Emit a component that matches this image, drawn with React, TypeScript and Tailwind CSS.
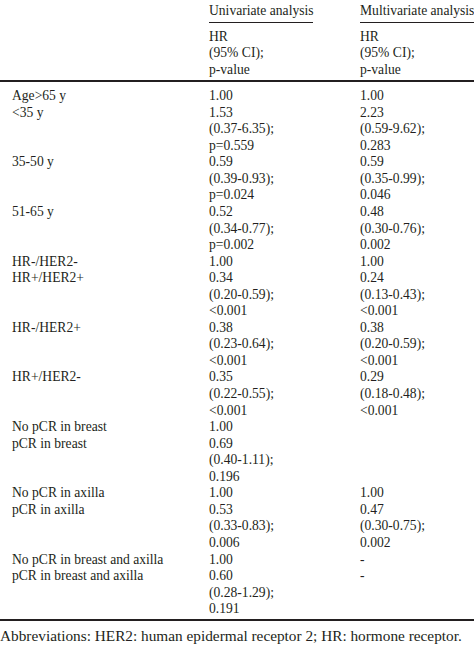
const ROWS: [string, string, string][] = [
  ['Age>65 y', '1.00', '1.00'],
  ['<35 y', '1.53', '2.23'],
  ['', '(0.37-6.35);', '(0.59-9.62);'],
  ['', 'p=0.559', '0.283'],
  ['35-50 y', '0.59', '0.59'],
  ['', '(0.39-0.93);', '(0.35-0.99);'],
  ['', 'p=0.024', '0.046'],
  ['51-65 y', '0.52', '0.48'],
  ['', '(0.34-0.77);', '(0.30-0.76);'],
  ['', 'p=0.002', '0.002'],
  ['HR-/HER2-', '1.00', '1.00'],
  ['HR+/HER2+', '0.34', '0.24'],
  ['', '(0.20-0.59);', '(0.13-0.43);'],
  ['', '<0.001', '<0.001'],
  ['HR-/HER2+', '0.38', '0.38'],
  ['', '(0.23-0.64);', '(0.20-0.59);'],
  ['', '<0.001', '<0.001'],
  ['HR+/HER2-', '0.35', '0.29'],
  ['', '(0.22-0.55);', '(0.18-0.48);'],
  ['', '<0.001', '<0.001'],
  ['No pCR in breast', '1.00', ''],
  ['pCR in breast', '0.69', ''],
  ['', '(0.40-1.11);', ''],
  ['', '0.196', ''],
  ['No pCR in axilla', '1.00', '1.00'],
  ['pCR in axilla', '0.53', '0.47'],
  ['', '(0.33-0.83);', '(0.30-0.75);'],
  ['', '0.006', '0.002'],
  ['No pCR in breast and axilla', '1.00', '-'],
  ['pCR in breast and axilla', '0.60', '-'],
  ['', '(0.28-1.29);', ''],
  ['', '0.191', ''],
]

export default function App() {
  return (
    <div className="w-[474px] h-[646px] overflow-hidden bg-white text-[#231f20] text-[13.6px] leading-[16.55px] font-['Liberation_Serif',serif]">
      {/* Header */}
      <div className="grid grid-cols-[209px_151px_1fr] pt-[3px]">
        <div />
        <div>
          <div className="w-[104px] border-b-[1.5px] border-[#231f20] pb-[2px] whitespace-nowrap">Univariate analysis</div>
        </div>
        <div>
          <div className="border-b-[1.5px] border-[#231f20] pb-[2px] whitespace-nowrap">Multivariate analysis</div>
        </div>
      </div>
      <div className="grid grid-cols-[209px_151px_1fr] pt-[6px] pb-[2px]">
        <div />
        <div>HR<br />(95% CI);<br />p-value</div>
        <div>HR<br />(95% CI);<br />p-value</div>
      </div>
      <div className="h-[2px] bg-[#231f20]" />

      {/* Body */}
      <div className="pt-[6px] pb-[1px]">
        {ROWS.map(([label, uni, multi], i) => (
          <div key={i} className="grid grid-cols-[209px_151px_1fr] h-[16.55px] whitespace-nowrap">
            <div className="pl-[12px]">{label}</div>
            <div>{uni}</div>
            <div>{multi}</div>
          </div>
        ))}
      </div>
      <div className="h-[2px] bg-[#231f20]" />

      <p className="pt-[6px] text-[15.3px] leading-[18px] whitespace-nowrap">Abbreviations: HER2: human epidermal receptor 2; HR: hormone receptor.</p>
    </div>
  )
}
